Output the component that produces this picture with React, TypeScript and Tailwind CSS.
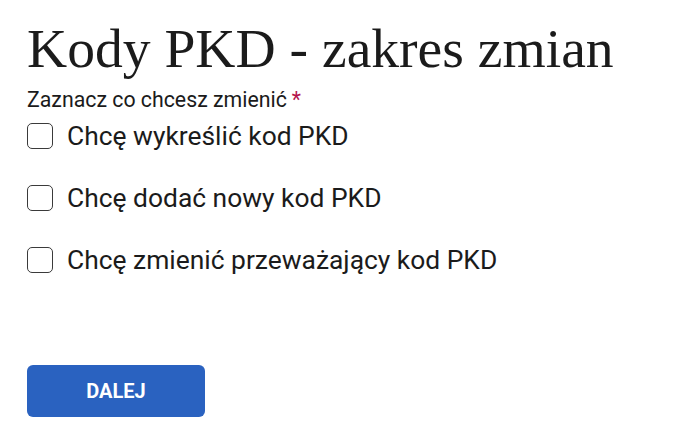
import { useState } from 'react';

const options = [
  'Chcę wykreślić kod PKD',
  'Chcę dodać nowy kod PKD',
  'Chcę zmienić przeważający kod PKD',
];

const App = () => {
  const [checked, setChecked] = useState<boolean[]>([false, false, false]);

  return (
    <div className="min-h-screen bg-white px-[27px] pt-[16px] font-['Roboto',sans-serif] text-[#1b1b1b]">
      {/* Header */}
      <h1 className="font-['Liberation_Serif',serif] text-[55.6px] leading-[64px] text-[#1b1b1b]">
        Kody PKD - zakres zmian
      </h1>

      <fieldset className="mt-[8px]">
        <legend className="text-[21.3px] leading-[24px] text-[#1b1b1b]">
          Zaznacz co chcesz zmienić
          <span className="ml-[5px] text-[#b5134b]">*</span>
        </legend>

        <div className="mt-[5px] flex flex-col gap-[25px]">
          {options.map((label, i) => (
            <label key={i} className="flex h-[37px] cursor-pointer items-center gap-[14px]">
              <input
                type="checkbox"
                checked={checked[i]}
                onChange={() => setChecked(c => c.map((v, j) => (j === i ? !v : v)))}
                className="h-[26px] w-[26px] shrink-0 appearance-none rounded-[5px] border-[1.5px] border-[#3a3a3a] bg-white checked:bg-[#2a62c0]"
              />
              <span className="text-[26.4px] leading-[30px]">{label}</span>
            </label>
          ))}
        </div>
      </fieldset>

      <button
        type="button"
        className="mt-[87px] flex h-[52px] w-[178px] items-center justify-center rounded-[6px] bg-[#2a62c0] text-[20px] font-bold text-white"
      >
        DALEJ
      </button>
    </div>
  );
};

export default App;
